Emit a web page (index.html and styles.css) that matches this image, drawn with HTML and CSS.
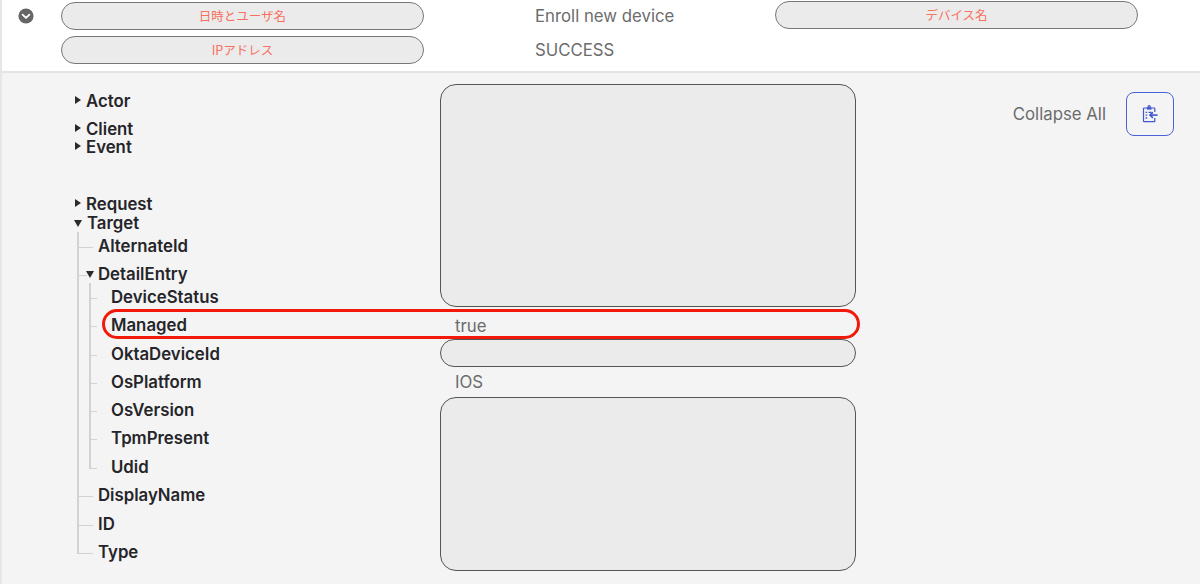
FILE: index.html
```html
<!DOCTYPE html>
<html lang="ja">
<head>
<meta charset="utf-8">
<title>Event detail</title>
<link rel="stylesheet" href="styles.css">
</head>
<body>
<div class="page">
  <header class="summary">
    <div class="toggle">
      <svg class="toggle-icon" viewBox="0 0 16 16" width="16" height="16"><circle cx="8" cy="8" r="7.6" fill="#666"/><path d="M4.6 6.6 8 9.9l3.4-3.3" fill="none" stroke="#fff" stroke-width="1.8" stroke-linecap="round" stroke-linejoin="round"/></svg>
    </div>
    <div class="pill">日時とユーザ名</div>
    <div class="summary-text">Enroll new device</div>
    <div class="pill pill-raised">デバイス名</div>
    <div class="pill pill-second">IPアドレス</div>
    <div class="summary-text summary-second">SUCCESS</div>
  </header>
  <main class="detail">
    <ul class="tree">
      <li class="node h28"><span class="arrow right"></span><span class="label">Actor</span></li>
      <li class="node h18"><span class="arrow right"></span><span class="label">Client</span></li>
      <li class="node h57"><span class="arrow right"></span><span class="label">Event</span></li>
      <li class="node h19"><span class="arrow right"></span><span class="label">Request</span></li>
      <li class="node h23"><span class="arrow down"></span><span class="label">Target</span></li>
      <li>
        <ul class="branch">
          <li class="leaf h28"><span class="label">AlternateId</span></li>
          <li class="leaf open">
            <div class="node h23 entry"><span class="arrow down"></span><span class="label">DetailEntry</span></div>
            <ul class="branch inner">
              <li class="leaf h28"><span class="label">DeviceStatus</span></li>
              <li class="leaf h29"><span class="label">Managed</span></li>
              <li class="leaf h28"><span class="label">OktaDeviceId</span></li>
              <li class="leaf h28"><span class="label">OsPlatform</span></li>
              <li class="leaf h28"><span class="label">OsVersion</span></li>
              <li class="leaf h29"><span class="label">TpmPresent</span></li>
              <li class="leaf h28"><span class="label">Udid</span></li>
            </ul>
          </li>
          <li class="leaf h29"><span class="label">DisplayName</span></li>
          <li class="leaf h28"><span class="label">ID</span></li>
          <li class="leaf h28"><span class="label">Type</span></li>
        </ul>
      </li>
    </ul>
    <section class="values">
      <div class="box box-large"></div>
      <div class="value value-true">true</div>
      <div class="box box-small"></div>
      <div class="value value-ios">IOS</div>
      <div class="box box-medium"></div>
    </section>
    <aside class="actions">
      <span class="collapse-text">Collapse All</span>
      <button class="collapse-btn" type="button" aria-label="Collapse All">
        <svg viewBox="0 0 16 18" width="16" height="18" fill="none" stroke="#3f57cf" stroke-width="1.2">
          <path d="M9.5 3H12.2a.6.6 0 0 1 .6.6V7M12.8 13v3a.6.6 0 0 1-.6.6H2.1a.6.6 0 0 1-.6-.6V3.6a.6.6 0 0 1 .6-.6H5"/>
          <rect x="4.8" y="2.2" width="4.8" height="2.4" fill="#3f57cf" stroke="none"/>
          <circle cx="7.2" cy="1.8" r="1.1"/>
          <path d="M3.6 7.4h1.6M3.6 10.2h1.6M3.6 13h1.6M6.6 7.4h3" stroke-width="1.3"/>
          <path d="M15.6 10.1H8.4" stroke-width="1.6"/>
          <path d="M10.9 7.4 8 10.1l2.9 2.7" stroke-width="1.6"/>
        </svg>
      </button>
    </aside>
    <div class="highlight"></div>
  </main>
</div>
</body>
</html>
```

FILE: styles.css
```css
* { box-sizing: border-box; }
html, body { margin: 0; padding: 0; height: 584px; overflow: hidden; }
body { background: #fff; font-family: Inter, "Noto Sans CJK JP", sans-serif; color: #222; }
ul { list-style: none; margin: 0; padding: 0; }

.page { border-left: 2px solid #e6e6e6; height: 584px; }

.summary {
  display: grid;
  grid-template-columns: 59px 363px 351px 363px;
  grid-auto-rows: 28px;
  row-gap: 6px;
  height: 73px;
  padding-top: 2px;
  border-bottom: 2px solid #e4e4e4;
  align-items: center;
}
.toggle { display: flex; padding-left: 16px; }
.toggle-icon { display: block; }
.pill {
  height: 28px;
  border: 1.5px solid #777;
  border-radius: 14px;
  background: #ebebeb;
  color: #f8705f;
  font: 400 12.5px/25px "Noto Sans CJK JP", Inter, sans-serif;
  text-align: center;
}
.pill-raised { grid-column: 4; margin-top: -2px; }
.pill-second { grid-column: 2; grid-row: 2; }
.summary-text { padding-left: 111px; font-size: 16.8px; line-height: 20px; color: #6c6c6c; white-space: nowrap; }
.summary-second { grid-column: 3; grid-row: 2; }

.detail {
  position: relative;
  display: flex;
  height: 511px;
  background: #f4f4f4;
}

.tree { width: 438px; padding: 18px 0 0 72px; flex: none; }
.label { font-size: 16.8px; line-height: 20px; font-weight: 600; color: #25252a; white-space: nowrap; }
.node { display: flex; align-items: flex-start; }
.arrow { flex: none; width: 0; height: 0; border-style: solid; border-color: transparent; }
.arrow.right { margin: 5px 5px 0 1px; border-width: 4.5px 0 4.5px 6.5px; border-left-color: #2a2a2a; }
.arrow.down { margin: 7px 5px 0 0; border-width: 7px 4px 0; border-top-color: #2a2a2a; }
.h18 { height: 18px; }
.h19 { height: 19px; }
.h23 { height: 23px; }
.h28 { height: 28px; }
.h29 { height: 29px; }
.h57 { height: 57px; }

.branch { margin-left: 3px; position: relative; }
.leaf { position: relative; padding-left: 21px; }
.leaf > .label { display: block; }
.leaf::before {
  content: "";
  position: absolute;
  left: 0;
  top: -10px;
  width: 14px;
  height: 21px;
  border-left: 2px solid #d2d2d2;
  border-bottom: 1.5px solid #d2d2d2;
}
.leaf::after {
  content: "";
  position: absolute;
  left: 0;
  top: 0;
  bottom: 0;
  border-left: 2px solid #d2d2d2;
}
.leaf:last-child::after { display: none; }
.branch > .leaf:first-child::before { top: -4px; height: 15px; }

.open { padding-left: 0; }
.open::before { width: 8px; }
.entry { margin-left: 9px; }
.entry .arrow.down { margin-right: 4px; margin-top: 7px; }
.inner { margin-left: 12px; }
.inner .leaf { padding-left: 22px; }
.inner .leaf::before { width: 6px; }

.values { flex: none; width: 416px; padding-top: 11px; }
.box { border: 1px solid #555; background: #ebebeb; }
.box-large { height: 223px; border-radius: 16px; }
.box-small { height: 28px; border-radius: 14px; }
.box-medium { height: 174px; border-radius: 16px; }
.value { padding-left: 15px; font-size: 16.8px; line-height: 20px; color: #6c6c6c; }
.value-true { height: 32px; padding-top: 9px; }
.value-ios { height: 30px; padding-top: 5px; }

.actions { flex: 1; display: flex; align-items: flex-start; justify-content: flex-end; padding: 19px 26px 0 0; gap: 20px; }
.collapse-text { font-size: 16.8px; line-height: 44px; color: #6c6c6c; }
.collapse-btn {
  width: 48px;
  height: 44px;
  padding: 0;
  display: flex;
  align-items: center;
  justify-content: center;
  background: transparent;
  border: 1.5px solid #4a62d8;
  border-radius: 8px;
}

.highlight {
  position: absolute;
  left: 100px;
  top: 236px;
  width: 758px;
  height: 30px;
  border: 3px solid #f0190a;
  border-radius: 15px;
}
```
